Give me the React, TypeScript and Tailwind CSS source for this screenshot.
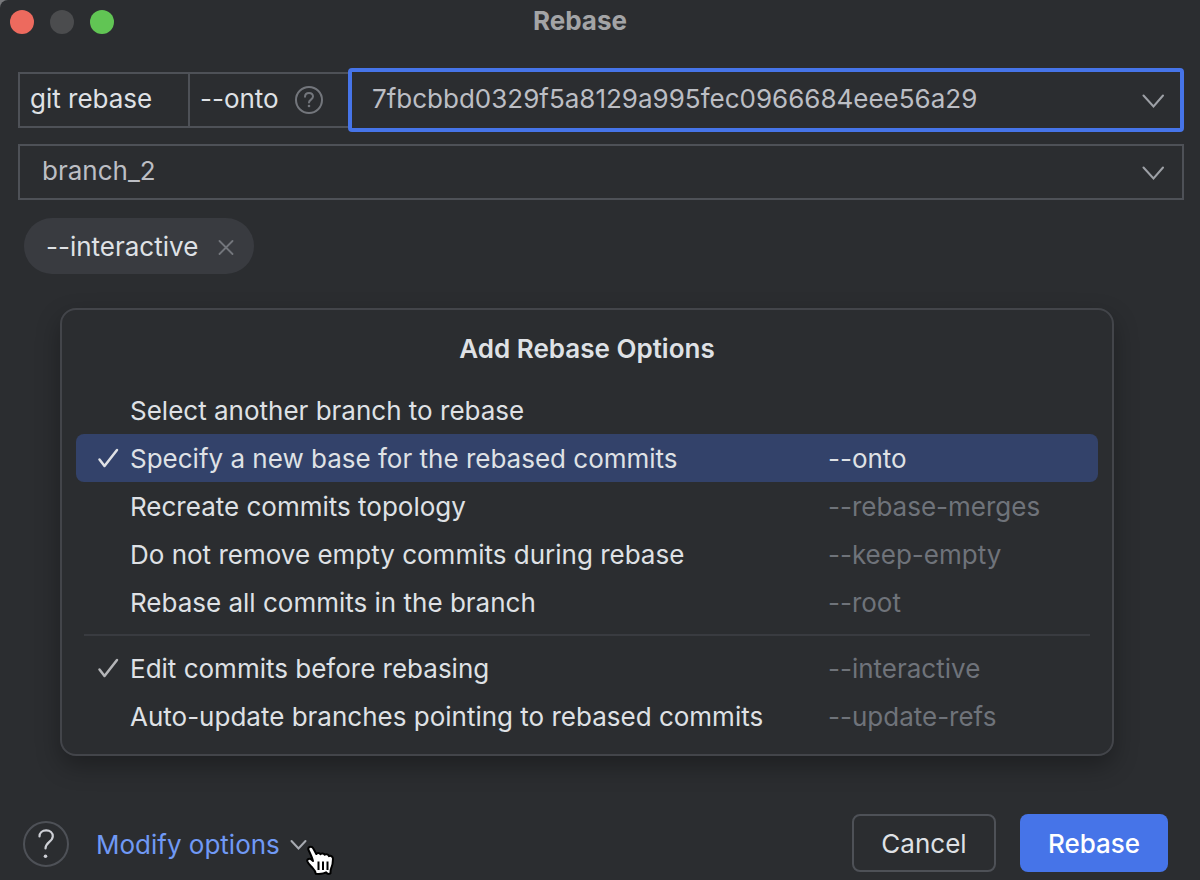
import { useState } from "react";

interface RebaseOption {
  label: string;
  flag?: string;
}

const BASE_OPTIONS: RebaseOption[] = [
  { label: "Select another branch to rebase" },
  { label: "Specify a new base for the rebased commits", flag: "--onto" },
  { label: "Recreate commits topology", flag: "--rebase-merges" },
  { label: "Do not remove empty commits during rebase", flag: "--keep-empty" },
  { label: "Rebase all commits in the branch", flag: "--root" },
];

const EDIT_OPTIONS: RebaseOption[] = [
  { label: "Edit commits before rebasing", flag: "--interactive" },
  { label: "Auto-update branches pointing to rebased commits", flag: "--update-refs" },
];

function Chevron({ className }: { className: string }) {
  return (
    <svg viewBox="0 0 22 14" fill="none" stroke="currentColor" strokeWidth="2" strokeLinecap="round" className={className} aria-hidden="true">
      <path d="M1.500 1.500 11.500 12.500 21 1.500" />
    </svg>
  );
}

function HandCursor() {
  return (
    <svg viewBox="0 0 30 32" className="absolute -right-7 top-5 w-[30px] h-8 pointer-events-none" aria-hidden="true">
      <path
        d="M3.500 2C5 1.300 6.500 2 7.300 3.500l3 5.500c.6-1.400 3.200-1.500 4.200.2 1-1.200 3.400-1 4.200.5 1.500-1 3.700-.2 4.300 1.400 2-.9 4 .6 4 2.700 0 4.300-.4 6.500-1.800 9.500-.8 1.600-.7 2.700-.7 5-1.500.9-3.300.8-4.400-1-1.600 1.300-7 1.700-10.300 1.500-.3-2.500-1.500-4-3.300-5.900C4.300 20.500 2 18.500 1.300 16.200c-.5-2 2.200-3.200 4-1.700l1.700 1.500C6 12 4 8 2.500 5c-.5-1.300-.1-2.500 1-3z"
        fill="#fff"
        stroke="#000"
        strokeWidth="2"
        strokeLinejoin="round"
      />
      <path d="M12.500 16.500v8.500M17 16.500v8.500M21.500 16.500v8.500" stroke="#000" strokeWidth="2" />
    </svg>
  );
}

interface OptionRowProps {
  option: RebaseOption;
  checked: boolean;
  active: boolean;
  onSelect: () => void;
}

function OptionRow({ option, checked, active, onSelect }: OptionRowProps) {
  return (
    <button
      type="button"
      role="menuitemcheckbox"
      aria-checked={checked}
      onClick={onSelect}
      className={`flex items-center w-full h-12 rounded-lg px-5 pt-0.5 text-left ${active ? "bg-[#33426a]" : ""}`}
    >
      <span className="w-[34px] shrink-0">
        {checked && (
          <svg viewBox="0 0 24 24" fill="none" stroke="currentColor" strokeWidth="2.500" strokeLinecap="round" strokeLinejoin="round" className={`w-6 h-6 ${active ? "text-[#dfe1e5]" : "text-[#b4b5b8]"}`} aria-hidden="true">
            <path d="m3.500 12.500 5 6.500L21 3" />
          </svg>
        )}
      </span>
      <span className="flex-1 whitespace-nowrap">{option.label}</span>
      <span className={`w-[250px] whitespace-nowrap ${active ? "text-[#dfe1e5]" : "text-[#6f737a]"}`}>{option.flag}</span>
    </button>
  );
}

export default function App() {
  const [checked, setChecked] = useState(["--onto", "--interactive"]);
  const [active, setActive] = useState(BASE_OPTIONS[1].label);

  const toggle = (option: RebaseOption) => {
    setActive(option.label);
    const flag = option.flag;
    if (!flag) return;
    setChecked((prev) => (prev.includes(flag) ? prev.filter((f) => f !== flag) : [...prev, flag]));
  };

  const renderOption = (option: RebaseOption) => (
    <OptionRow
      key={option.label}
      option={option}
      checked={!!option.flag && checked.includes(option.flag)}
      active={active === option.label}
      onSelect={() => toggle(option)}
    />
  );

  return (
    <div className="bg-[#77787b]">
      <div className="flex flex-col min-h-screen rounded-tl-lg bg-[#2b2d30] text-[#dfe1e5] font-['Inter',sans-serif] text-[26px] leading-8">
        {/* Title bar */}
        <header className="grid grid-cols-[1fr_auto_1fr] items-center h-11 pl-[10px] pr-[50px]">
          <div className="flex gap-4">
            <button type="button" aria-label="Close" className="w-6 h-6 rounded-full bg-[#ed6a5e]" />
            <button type="button" aria-label="Minimize" className="w-6 h-6 rounded-full bg-[#4b4c4e]" />
            <button type="button" aria-label="Zoom" className="w-6 h-6 rounded-full bg-[#61c554]" />
          </div>
          <h1 className="pb-0.5 font-bold text-[#a3a4a6]">Rebase</h1>
        </header>

        <main className="flex flex-col pt-6 pl-[18px] pr-4">
          {/* Command line */}
          <div className="flex items-center">
            <div className="flex w-[330px] h-14 border-2 border-r-0 border-[#4e5157]">
              <span className="flex items-center w-[170px] pl-[10px] pb-0.5 border-r-2 border-[#4e5157]">git rebase</span>
              <label htmlFor="onto" className="flex items-center pl-[10px] pb-0.5">
                --onto
              </label>
              <button type="button" aria-label="About --onto" className="self-center ml-4 text-[#73767c]">
                <svg viewBox="0 0 28 28" fill="none" stroke="currentColor" strokeWidth="2" strokeLinecap="round" className="w-7 h-7" aria-hidden="true">
                  <circle cx="14" cy="14" r="13" />
                  <path d="M10 10.800c0-2.400 1.700-3.900 4-3.900s4 1.500 4 3.700c0 3-4 3.100-4 6" />
                  <circle cx="14" cy="20" r="1.300" fill="currentColor" stroke="none" />
                </svg>
              </button>
            </div>
            <div className="relative flex-1">
              <select id="onto" className="block appearance-none w-full h-16 pl-5 pr-14 pb-0.5 border-4 border-[#4674e8] rounded-sm bg-[#2b2d30] text-[#bcbec4] outline-none">
                <option>7fbcbbd0329f5a8129a995fec0966684eee56a29</option>
              </select>
              <Chevron className="absolute right-5 top-[26px] w-[22px] h-[14px] text-[#9da0a6] pointer-events-none" />
            </div>
          </div>

          <div className="relative mt-3">
            <select aria-label="Branch" className="block appearance-none w-full h-14 pl-[22px] pr-14 pb-0.5 border-2 border-[#4e5157] bg-[#2b2d30] text-[#bcbec4] outline-none">
              <option>branch_2</option>
            </select>
            <Chevron className="absolute right-5 top-[22px] w-[22px] h-[14px] text-[#9da0a6] pointer-events-none" />
          </div>

          <div className="flex items-center self-start h-14 mt-[18px] ml-[6px] pl-[22px] pr-5 pt-0.5 gap-5 rounded-full bg-[#393b40]">
            --interactive
            <button type="button" aria-label="Remove --interactive" className="text-[#73767c]">
              <svg viewBox="0 0 16 16" stroke="currentColor" strokeWidth="1.800" strokeLinecap="round" className="w-4 h-4" aria-hidden="true">
                <path d="m1.500 2 13 13m0-13-13 13" />
              </svg>
            </button>
          </div>
        </main>

        {/* Options popup */}
        <section role="menu" aria-labelledby="options-title" className="mt-[34px] ml-[60px] mr-[86px] px-[14px] pt-[22px] pb-[14px] border-2 border-[#43454a] rounded-2xl bg-[#2b2d30] shadow-[0_10px_24px_rgba(0,0,0,0.3)]">
          <h2 id="options-title" className="pt-px mb-[21px] font-semibold text-center">
            Add Rebase Options
          </h2>
          {BASE_OPTIONS.map(renderOption)}
          <hr className="mx-2 my-2 border-t-2 border-[#393b40]" />
          {EDIT_OPTIONS.map(renderOption)}
        </section>

        <footer className="flex items-center mt-auto pt-6 pb-2 pl-[23px] pr-8">
          <button type="button" aria-label="Help" className="pt-0.5">
            <svg viewBox="0 0 46 46" fill="none" strokeLinecap="round" className="w-[46px] h-[46px]" aria-hidden="true">
              <circle cx="23" cy="23" r="22" stroke="#4e5157" strokeWidth="2" />
              <path d="M16.500 15.500c0-3.800 2.800-6.100 6.700-6.100s6.600 2.400 6.600 5.900c0 5.500-7.300 5.900-7.300 12.200" stroke="#ced0d6" strokeWidth="2.200" />
              <circle cx="22.500" cy="35.300" r="1.800" fill="#ced0d6" />
            </svg>
          </button>
          <button type="button" className="relative flex items-center gap-[10px] ml-[27px] pt-1 text-[#7099f5]">
            Modify options
            <svg viewBox="0 0 18 12" fill="none" stroke="currentColor" strokeWidth="2" strokeLinecap="round" className="w-[18px] h-3 text-[#a8abb2]" aria-hidden="true">
              <path d="m1.500 2 7 7.500 7-7.500" />
            </svg>
            <HandCursor />
          </button>
          <button type="button" className="w-36 h-[58px] ml-auto pt-0.5 border-2 border-[#4e5157] rounded-lg">
            Cancel
          </button>
          <button type="button" className="w-[148px] h-[58px] ml-6 pt-0.5 rounded-lg bg-[#4674e8] font-medium text-white">
            Rebase
          </button>
        </footer>
      </div>
    </div>
  );
}
